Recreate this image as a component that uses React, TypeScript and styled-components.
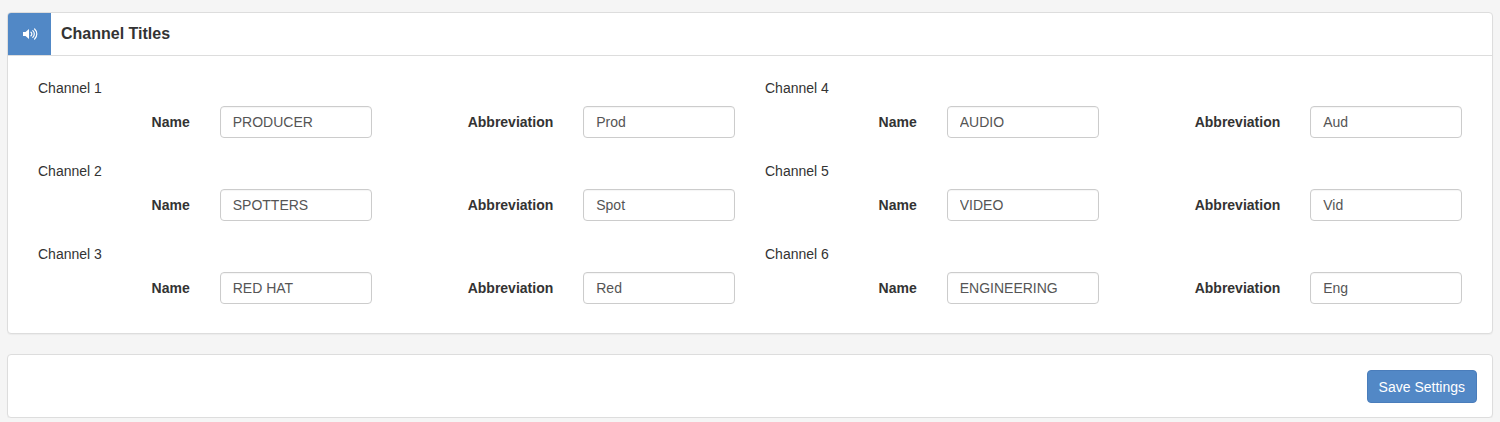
import React from 'react'
import styled, { createGlobalStyle } from 'styled-components'

const GlobalStyle = createGlobalStyle`
  html, body {
    margin: 0;
    padding: 0;
    background: #f5f5f5;
  }
  body {
    font-family: 'Liberation Sans', Arial, sans-serif;
    font-size: 14px;
    color: #333333;
  }
  * {
    box-sizing: border-box;
  }
`

const Page = styled.div`
  padding: 12px 7px 0;
  display: flex;
  flex-direction: column;
  gap: 20px;
`

const Panel = styled.section`
  background: #ffffff;
  border: 1px solid #dddddd;
  border-radius: 4px;
  box-shadow: 0 1px 1px rgba(0, 0, 0, 0.04);
  overflow: hidden;
`

const Header = styled.div`
  display: flex;
  align-items: stretch;
  height: 43px;
  border-bottom: 1px solid #dddddd;
`

const IconBox = styled.div`
  width: 43px;
  margin-top: -1px;
  background: #5188c6;
  display: flex;
  align-items: center;
  justify-content: center;
`

const Title = styled.h3`
  margin: 0 0 0 10px;
  display: flex;
  align-items: center;
  font-size: 16px;
  font-weight: 700;
  color: #333333;
`

const Body = styled.div`
  display: grid;
  grid-template-columns: 1fr 1fr;
  column-gap: 30px;
  padding: 22px 30px 29px 30px;
`

const Column = styled.div`
  display: flex;
  flex-direction: column;
  gap: 23px;
`

const Channel = styled.div`
  display: flex;
  flex-direction: column;
  gap: 8px;
`

const ChannelLabel = styled.div`
  line-height: 20px;
  font-size: 14px;
  color: #333333;
`

const FieldRow = styled.div`
  display: grid;
  grid-template-columns: repeat(4, 1fr);
  column-gap: 30px;
  align-items: center;
`

const FieldLabel = styled.label`
  text-align: right;
  font-weight: 700;
  font-size: 14px;
`

const Input = styled.input`
  width: 100%;
  height: 32px;
  padding: 6px 12px;
  border: 1px solid #cccccc;
  border-radius: 4px;
  font-family: 'Liberation Sans', Arial, sans-serif;
  font-size: 14px;
  color: #555555;
  background: #ffffff;
  box-shadow: inset 0 1px 1px rgba(0, 0, 0, 0.04);
`

const Footer = styled.div`
  display: flex;
  justify-content: flex-end;
  padding: 15px 15px 14px;
`

const Button = styled.button`
  height: 33px;
  padding: 0 11px;
  background: #5288c6;
  border: 1px solid #4a7dbb;
  border-radius: 4px;
  color: #ffffff;
  font-family: 'Liberation Sans', Arial, sans-serif;
  font-size: 14px;
  cursor: pointer;
`

const channels = [
  { id: 1, name: 'PRODUCER', abbr: 'Prod' },
  { id: 2, name: 'SPOTTERS', abbr: 'Spot' },
  { id: 3, name: 'RED HAT', abbr: 'Red' },
  { id: 4, name: 'AUDIO', abbr: 'Aud' },
  { id: 5, name: 'VIDEO', abbr: 'Vid' },
  { id: 6, name: 'ENGINEERING', abbr: 'Eng' },
]

function SpeakerIcon() {
  return (
    <svg width="16" height="12" viewBox="0 0 16 12" fill="none">
      <path d="M1 4h2.5L7 1v10L3.5 8H1z" fill="#fff" />
      <path d="M9 4.2a2.4 2.4 0 0 1 0 3.6" stroke="#fff" strokeWidth="1.2" strokeLinecap="round" />
      <path d="M10.8 2.6a4.6 4.6 0 0 1 0 6.8" stroke="#fff" strokeWidth="1.2" strokeLinecap="round" />
      <path d="M12.6 1a6.8 6.8 0 0 1 0 10" stroke="#fff" strokeWidth="1.2" strokeLinecap="round" />
    </svg>
  )
}

type ChannelData = { id: number; name: string; abbr: string }

function ChannelBlock({ channel }: { channel: ChannelData }) {
  return (
    <Channel>
      <ChannelLabel>Channel {channel.id}</ChannelLabel>
      <FieldRow>
        <FieldLabel>Name</FieldLabel>
        <Input defaultValue={channel.name} />
        <FieldLabel>Abbreviation</FieldLabel>
        <Input defaultValue={channel.abbr} />
      </FieldRow>
    </Channel>
  )
}

export default function App() {
  return (
    <>
      <GlobalStyle />
      <Page>
        <Panel>
          <Header>
            <IconBox>
              <SpeakerIcon />
            </IconBox>
            <Title>Channel Titles</Title>
          </Header>
          <Body>
            <Column>
              {channels.slice(0, 3).map((c) => (
                <ChannelBlock key={c.id} channel={c} />
              ))}
            </Column>
            <Column>
              {channels.slice(3).map((c) => (
                <ChannelBlock key={c.id} channel={c} />
              ))}
            </Column>
          </Body>
        </Panel>
        <Panel>
          <Footer>
            <Button>Save Settings</Button>
          </Footer>
        </Panel>
      </Page>
    </>
  )
}
